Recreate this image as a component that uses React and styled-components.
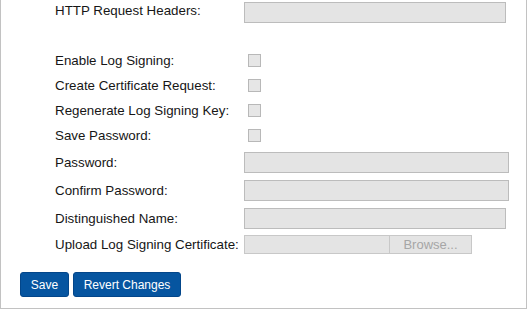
import React from 'react'
import styled, { createGlobalStyle } from 'styled-components'

const GlobalStyle = createGlobalStyle`
    html, body {
        margin: 0;
        padding: 0;
        background: #ffffff;
    }
    body {
        font-family: "Liberation Sans", Arial, sans-serif;
        font-size: 13.33px;
        color: #161616;
    }
`

const Frame = styled.div`
    box-sizing: border-box;
    width: 527px;
    height: 309px;
    border: 1px solid #c2c2c2;
    border-top: none;
    display: flex;
    flex-direction: column;
`

const Form = styled.div`
    display: flex;
    flex-direction: column;
    padding-left: 54px;
`

const Row = styled.div`
    display: flex;
    align-items: ${p => (p.$top ? 'flex-start' : 'center')};
    height: ${p => p.$h}px;
    margin-bottom: ${p => p.$gap || 0}px;
`

const Label = styled.label`
    width: 189px;
    flex: none;
    line-height: 15px;
    margin-top: ${p => p.$mt || 0}px;
`

const TextInput = styled.input`
    box-sizing: border-box;
    width: ${p => p.$w}px;
    height: 21px;
    margin: ${p => p.$mt || 0}px 0 0 0;
    padding: 0 4px;
    background: #e4e4e4;
    border: 1px solid #bcbcbc;
    border-radius: 0;
    outline: none;
`

const Check = styled.span`
    display: block;
    box-sizing: border-box;
    width: 13px;
    height: 13px;
    margin-left: 4px;
    background: #e6e6e6;
    border: 1px solid #b8b8b8;
`

const FileBox = styled.div`
    display: flex;
    height: 19px;
`

const FileName = styled.div`
    box-sizing: border-box;
    width: 145px;
    height: 19px;
    background: #e4e4e4;
    border: 1px solid #c8c8c8;
    border-right: none;
`

const Browse = styled.button`
    box-sizing: border-box;
    width: 83px;
    height: 19px;
    padding: 0;
    background: #e4e4e4;
    border: 1px solid #c8c8c8;
    border-radius: 0;
    color: #a6a6a6;
    font-family: "Liberation Sans", Arial, sans-serif;
    font-size: 13px;
`

const Actions = styled.div`
    display: flex;
    gap: 4px;
    padding-left: 19px;
    margin-top: 16px;
`

const Button = styled.button`
    box-sizing: border-box;
    height: 25px;
    width: ${p => p.$w}px;
    padding: 0;
    background: #0655a0;
    border: 1px solid #03468a;
    border-radius: 3px;
    color: #ffffff;
    font-family: "Liberation Sans", Arial, sans-serif;
    font-size: 12px;
    cursor: pointer;
`

const checks = [
    'Enable Log Signing:',
    'Create Certificate Request:',
    'Regenerate Log Signing Key:',
    'Save Password:',
]

const fields = [
    { label: 'Password:', w: 265, type: 'password' },
    { label: 'Confirm Password:', w: 265, type: 'password' },
    { label: 'Distinguished Name:', w: 262, type: 'text' },
]

const App = () => {
    return (
        <>
            <GlobalStyle />
            <Frame>
                <Form>
                    <Row $h={26} $gap={22} $top>
                        <Label $mt={3}>HTTP Request Headers:</Label>
                        <TextInput $w={262} $mt={2} disabled />
                    </Row>
                    {checks.map(c => (
                        <Row key={c} $h={25}>
                            <Label>{c}</Label>
                            <Check />
                        </Row>
                    ))}
                    {fields.map(f => (
                        <Row key={f.label} $h={28}>
                            <Label>{f.label}</Label>
                            <TextInput $w={f.w} type={f.type} disabled />
                        </Row>
                    ))}
                    <Row $h={24}>
                        <Label>Upload Log Signing Certificate:</Label>
                        <FileBox>
                            <FileName />
                            <Browse type="button">Browse...</Browse>
                        </FileBox>
                    </Row>
                </Form>
                <Actions>
                    <Button $w={49} type="button">Save</Button>
                    <Button $w={108} type="button">Revert Changes</Button>
                </Actions>
            </Frame>
        </>
    )
}

export default App
